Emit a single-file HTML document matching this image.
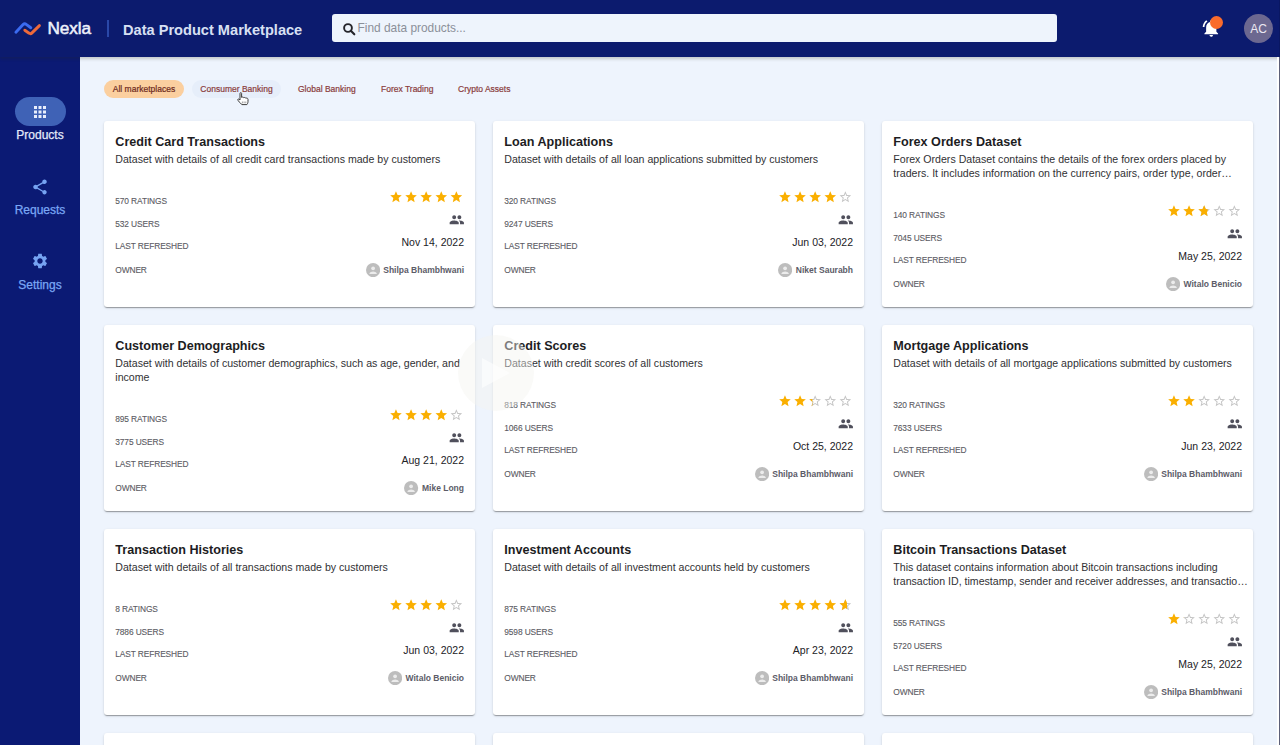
<!DOCTYPE html>
<html><head><meta charset="utf-8"><title>Data Product Marketplace</title>
<style>
*{margin:0;padding:0;box-sizing:border-box}
html,body{width:1280px;height:745px;overflow:hidden;background:#eef4fd;font-family:"Liberation Sans",sans-serif}
#hdr{position:absolute;left:0;top:0;width:1280px;height:57px;background:#0c1b6e;z-index:3;box-shadow:0 2px 3px rgba(40,40,20,0.22)}
#side{position:absolute;left:0;top:57px;width:80px;height:688px;background:#0b1a74;z-index:2}
.card{position:absolute;width:371px;height:186px;background:#fff;border-radius:3px;box-shadow:0px 2px 1px -1px rgba(0,0,0,0.2),0px 1px 1px 0px rgba(0,0,0,0.14),0px 1px 3px 0px rgba(0,0,0,0.12)}
.card div{position:absolute;white-space:nowrap}
.ttl{left:11.3px;font-size:12.6px;line-height:12.6px;font-weight:bold;color:#1d1d1f}
.dsc{left:11.3px;font-size:10.6px;line-height:14px;color:#313134}
.lab{left:11.3px;font-size:8.4px;line-height:8.4px;letter-spacing:-0.12px;color:#5a5a62;-webkit-text-stroke:0.1px #5a5a62}
.stars{position:absolute}
.ppl{position:absolute}
.date{right:11px;font-size:10.5px;line-height:10.5px;color:#222226}
.own{right:11px;font-size:8.5px;line-height:8.5px;font-weight:bold;color:#5c5c68}
.av{position:absolute;left:-17.6px;top:-2.9px;width:14.2px;height:14.2px}
.av svg{display:block}
.chip{position:absolute;top:80px;height:17.5px;border-radius:9px;font-size:8.5px;line-height:18.9px;color:#7a3434;white-space:nowrap;-webkit-text-stroke:0.2px currentColor}
.nav{position:absolute;left:0;width:80px;text-align:center;font-size:12px;line-height:12px;color:#7aa7f5;-webkit-text-stroke:0.25px #7aa7f5}
</style></head>
<body>

<div id="hdr">
  <svg style="position:absolute;left:12px;top:20px" width="32" height="18" viewBox="0 0 32 18">
    <path d="M3.9 12.3 L11.1 4.6 Q12.6 3.1 14.2 4.4 L18.8 7.7" fill="none" stroke="#3b6bf0" stroke-width="2.9" stroke-linecap="round" stroke-linejoin="round"/>
    <path d="M12.8 10.2 L17.1 13.2 Q18.6 14.3 20 12.9 L27.4 5.6" fill="none" stroke="#ee693a" stroke-width="2.9" stroke-linecap="round" stroke-linejoin="round"/>
  </svg>
  <div style="position:absolute;left:47.5px;top:20.3px;font-size:17.2px;line-height:17px;color:#eef1fa;letter-spacing:-0.1px;-webkit-text-stroke:0.5px #eef1fa">Nexla</div>
  <div style="position:absolute;left:107px;top:20px;width:1.5px;height:17px;background:#2a48a8"></div>
  <div style="position:absolute;left:123px;top:22.6px;font-size:14.6px;line-height:14.6px;color:#d8e0f3;font-weight:bold">Data Product Marketplace</div>
  <div style="position:absolute;left:332px;top:14px;width:725px;height:28px;background:#eef4fc;border-radius:3px"></div>
  <svg style="position:absolute;left:342px;top:22px" width="14" height="14" viewBox="0 0 14 14"><circle cx="6" cy="6" r="3.9" fill="none" stroke="#25252a" stroke-width="1.9"/><path d="M8.8 8.8 L12.3 12.3" stroke="#25252a" stroke-width="2.1" stroke-linecap="round"/></svg>
  <div style="position:absolute;left:357.5px;top:23px;font-size:11.9px;line-height:11.9px;color:#8b9099">Find data products...</div>
  <svg style="position:absolute;left:1201px;top:17.5px" width="20.5" height="20.5" viewBox="0 0 24 24"><path d="M7.58 4.08 6.15 2.65C3.75 4.48 2.17 7.3 2.03 10.5h2c.15-2.65 1.51-4.97 3.55-6.42zm12.39 6.42h2c-.15-3.2-1.73-6.02-4.12-7.85l-1.42 1.43c2.02 1.45 3.39 3.77 3.54 6.42zM18 11c0-3.07-1.64-5.64-4.5-6.32V4c0-.83-.67-1.5-1.5-1.5s-1.5.67-1.5 1.5v.68C7.63 5.36 6 7.92 6 11v5l-2 2v1h16v-1l-2-2v-5zm-6 11c.14 0 .27-.01.4-.04.65-.14 1.18-.58 1.44-1.18.1-.24.15-.5.15-.78h-4c.01 1.1.9 2 2.01 2z" fill="#ffffff"/></svg>
  <div style="position:absolute;left:1209.8px;top:15.8px;width:13.5px;height:13.5px;border-radius:50%;background:#fa6b2c"></div>
  <div style="position:absolute;left:1244px;top:13.5px;width:29px;height:29px;border-radius:50%;background:#6c6890;color:#ece9f2;font-size:12px;line-height:30.5px;text-align:center">AC</div>
</div>


<div id="side">
  <div style="position:absolute;left:14.5px;top:40px;width:51.5px;height:29px;border-radius:15px;background:#3f62b6"></div>
  <svg style="position:absolute;left:34.4px;top:48.8px" width="12" height="12" viewBox="4 4 16 16"><path d="M4 8h4V4H4v4zm6 12h4v-4h-4v4zm-6 0h4v-4H4v4zm0-6h4v-4H4v4zm6 0h4v-4h-4v4zm6-10v4h4V4h-4zm-6 4h4V4h-4v4zm6 6h4v-4h-4v4zm0 6h4v-4h-4v4z" fill="#e8eefc"/></svg>
  <div class="nav" style="top:72px;color:#e3eafa;-webkit-text-stroke:0.25px #e3eafa">Products</div>
  <svg style="position:absolute;left:31px;top:120.5px" width="18" height="18" viewBox="0 0 24 24"><path d="M18 16.08c-.76 0-1.44.3-1.96.77L8.91 12.7c.05-.23.09-.46.09-.7s-.04-.47-.09-.7l7.05-4.11c.54.5 1.25.81 2.04.81 1.66 0 3-1.34 3-3s-1.34-3-3-3-3 1.34-3 3c0 .24.04.47.09.7L8.04 9.81C7.5 9.31 6.79 9 6 9c-1.66 0-3 1.34-3 3s1.34 3 3 3c.79 0 1.5-.31 2.04-.81l7.12 4.16c-.05.21-.08.43-.08.65 0 1.61 1.31 2.92 2.92 2.92 1.61 0 2.92-1.31 2.92-2.92s-1.31-2.92-2.92-2.92z" fill="#76a3f2"/></svg>
  <div class="nav" style="top:147px">Requests</div>
  <svg style="position:absolute;left:31px;top:195px" width="18" height="18" viewBox="0 0 24 24"><path d="M19.14 12.94c.04-.3.06-.61.06-.94 0-.32-.02-.64-.07-.94l2.03-1.58c.18-.14.23-.41.12-.61l-1.92-3.32c-.12-.22-.37-.29-.59-.22l-2.39.96c-.5-.38-1.03-.7-1.62-.94l-.36-2.54c-.04-.24-.24-.41-.48-.41h-3.84c-.24 0-.43.17-.47.41l-.36 2.54c-.59.24-1.13.57-1.62.94l-2.39-.96c-.22-.08-.47 0-.59.22L2.74 8.87c-.12.21-.08.47.12.61l2.03 1.58c-.05.3-.09.63-.09.94s.02.64.07.94l-2.03 1.58c-.18.14-.23.41-.12.61l1.92 3.32c.12.22.37.29.59.22l2.39-.96c.5.38 1.03.7 1.62.94l.36 2.54c.05.24.24.41.48.41h3.84c.24 0 .44-.17.47-.41l.36-2.54c.59-.24 1.13-.56 1.62-.94l2.39.96c.22.08.47 0 .59-.22l1.92-3.32c.12-.22.07-.47-.12-.61l-2.01-1.58zM12 15.6c-1.98 0-3.6-1.62-3.6-3.6s1.62-3.6 3.6-3.6 3.6 1.62 3.6 3.6-1.62 3.6-3.6 3.6z" fill="#76a3f2"/></svg>
  <div class="nav" style="top:222px">Settings</div>
</div>

<div class="chip" style="left:104px;color:#6e2a1c;background:#fbcf9f;width:80px;text-align:center;">All marketplaces</div><div class="chip" style="left:192px;color:#8a3c3c;background:#e6eefa;width:89px;text-align:center;">Consumer Banking</div><div class="chip" style="left:290px;color:#8a3c3c;padding:0 8px;">Global Banking</div><div class="chip" style="left:373px;color:#8a3c3c;padding:0 8px;">Forex Trading</div><div class="chip" style="left:450px;color:#8a3c3c;padding:0 8px;">Crypto Assets</div>
<div class="card" style="left:104px;top:120.5px"><div class="ttl" style="top:15.33px">Credit Card Transactions</div><div class="dsc" style="top:31.43px">Dataset with details of all credit card transactions made by customers</div><div class="lab" style="top:76.19px">570 RATINGS</div><div class="lab" style="top:99.19px">532 USERS</div><div class="lab" style="top:121.69px">LAST REFRESHED</div><div class="lab" style="top:145.19px">OWNER</div><svg class="stars" style="left:284.84px;top:69.14px" width="76" height="14" viewBox="0 0 76 14"><g transform="translate(0.00,0) scale(0.5800)"><path d="M12 17.27L18.18 21l-1.64-7.03L22 9.24l-7.19-.61L12 2 9.19 8.63 2 9.24l5.46 4.73L5.82 21z" fill="#faaf00"/></g><g transform="translate(15.10,0) scale(0.5800)"><path d="M12 17.27L18.18 21l-1.64-7.03L22 9.24l-7.19-.61L12 2 9.19 8.63 2 9.24l5.46 4.73L5.82 21z" fill="#faaf00"/></g><g transform="translate(30.20,0) scale(0.5800)"><path d="M12 17.27L18.18 21l-1.64-7.03L22 9.24l-7.19-.61L12 2 9.19 8.63 2 9.24l5.46 4.73L5.82 21z" fill="#faaf00"/></g><g transform="translate(45.30,0) scale(0.5800)"><path d="M12 17.27L18.18 21l-1.64-7.03L22 9.24l-7.19-.61L12 2 9.19 8.63 2 9.24l5.46 4.73L5.82 21z" fill="#faaf00"/></g><g transform="translate(60.40,0) scale(0.5800)"><path d="M12 17.27L18.18 21l-1.64-7.03L22 9.24l-7.19-.61L12 2 9.19 8.63 2 9.24l5.46 4.73L5.82 21z" fill="#faaf00"/></g></svg><svg class="ppl" style="left:345.25px;top:91.95px" width="15.60" height="15.60" viewBox="0 0 24 24"><path d="M16 11c1.66 0 2.99-1.34 2.99-3S17.66 5 16 5c-1.66 0-3 1.34-3 3s1.34 3 3 3zm-8 0c1.66 0 2.99-1.34 2.99-3S9.66 5 8 5C6.34 5 5 6.34 5 8s1.34 3 3 3zm0 2c-2.33 0-7 1.17-7 3.5V19h14v-2.5c0-2.33-4.67-3.5-7-3.5zm8 0c-.29 0-.62.02-.97.05 1.16.84 1.97 1.97 1.97 3.45V19h6v-2.5c0-2.33-4.67-3.5-7-3.5z" fill="#50505c"/></svg><div class="date" style="top:116.31px">Nov 14, 2022</div><div class="own" style="top:145.00px"><span class="av" style=""><svg width="14.2" height="14.2" viewBox="0 0 24 24"><circle cx="12" cy="12" r="12" fill="#bdbdbd"/><circle cx="12" cy="9" r="3.2" fill="#ececec"/><path d="M5.8 17.6c0-2.2 4.1-3.4 6.2-3.4s6.2 1.2 6.2 3.4v.9H5.8z" fill="#ececec"/></svg></span>Shilpa Bhambhwani</div></div><div class="card" style="left:493px;top:120.5px"><div class="ttl" style="top:15.33px">Loan Applications</div><div class="dsc" style="top:31.43px">Dataset with details of all loan applications submitted by customers</div><div class="lab" style="top:76.19px">320 RATINGS</div><div class="lab" style="top:99.19px">9247 USERS</div><div class="lab" style="top:121.69px">LAST REFRESHED</div><div class="lab" style="top:145.19px">OWNER</div><svg class="stars" style="left:284.84px;top:69.14px" width="76" height="14" viewBox="0 0 76 14"><g transform="translate(0.00,0) scale(0.5800)"><path d="M12 17.27L18.18 21l-1.64-7.03L22 9.24l-7.19-.61L12 2 9.19 8.63 2 9.24l5.46 4.73L5.82 21z" fill="#faaf00"/></g><g transform="translate(15.10,0) scale(0.5800)"><path d="M12 17.27L18.18 21l-1.64-7.03L22 9.24l-7.19-.61L12 2 9.19 8.63 2 9.24l5.46 4.73L5.82 21z" fill="#faaf00"/></g><g transform="translate(30.20,0) scale(0.5800)"><path d="M12 17.27L18.18 21l-1.64-7.03L22 9.24l-7.19-.61L12 2 9.19 8.63 2 9.24l5.46 4.73L5.82 21z" fill="#faaf00"/></g><g transform="translate(45.30,0) scale(0.5800)"><path d="M12 17.27L18.18 21l-1.64-7.03L22 9.24l-7.19-.61L12 2 9.19 8.63 2 9.24l5.46 4.73L5.82 21z" fill="#faaf00"/></g><g transform="translate(60.40,0) scale(0.5800)"><path d="M22 9.24l-7.19-.62L12 2 9.19 8.63 2 9.24l5.46 4.73L5.82 21 12 17.27 18.18 21l-1.63-7.03L22 9.24zM12 15.4l-3.76 2.27 1-4.28-3.32-2.88 4.38-.38L12 6.1l1.71 4.04 4.38.38-3.32 2.88 1 4.28L12 15.4z" fill="#c4c4c4"/></g></svg><svg class="ppl" style="left:345.25px;top:91.95px" width="15.60" height="15.60" viewBox="0 0 24 24"><path d="M16 11c1.66 0 2.99-1.34 2.99-3S17.66 5 16 5c-1.66 0-3 1.34-3 3s1.34 3 3 3zm-8 0c1.66 0 2.99-1.34 2.99-3S9.66 5 8 5C6.34 5 5 6.34 5 8s1.34 3 3 3zm0 2c-2.33 0-7 1.17-7 3.5V19h14v-2.5c0-2.33-4.67-3.5-7-3.5zm8 0c-.29 0-.62.02-.97.05 1.16.84 1.97 1.97 1.97 3.45V19h6v-2.5c0-2.33-4.67-3.5-7-3.5z" fill="#50505c"/></svg><div class="date" style="top:116.31px">Jun 03, 2022</div><div class="own" style="top:145.00px"><span class="av" style=""><svg width="14.2" height="14.2" viewBox="0 0 24 24"><circle cx="12" cy="12" r="12" fill="#bdbdbd"/><circle cx="12" cy="9" r="3.2" fill="#ececec"/><path d="M5.8 17.6c0-2.2 4.1-3.4 6.2-3.4s6.2 1.2 6.2 3.4v.9H5.8z" fill="#ececec"/></svg></span>Niket Saurabh</div></div><div class="card" style="left:882px;top:120.5px"><div class="ttl" style="top:15.33px">Forex Orders Dataset</div><div class="dsc" style="top:31.43px">Forex Orders Dataset contains the details of the forex orders placed by<br>traders. It includes information on the currency pairs, order type, order…</div><div class="lab" style="top:90.19px">140 RATINGS</div><div class="lab" style="top:113.19px">7045 USERS</div><div class="lab" style="top:135.69px">LAST REFRESHED</div><div class="lab" style="top:159.19px">OWNER</div><svg class="stars" style="left:284.84px;top:83.14px" width="76" height="14" viewBox="0 0 76 14"><g transform="translate(0.00,0) scale(0.5800)"><path d="M12 17.27L18.18 21l-1.64-7.03L22 9.24l-7.19-.61L12 2 9.19 8.63 2 9.24l5.46 4.73L5.82 21z" fill="#faaf00"/></g><g transform="translate(15.10,0) scale(0.5800)"><path d="M12 17.27L18.18 21l-1.64-7.03L22 9.24l-7.19-.61L12 2 9.19 8.63 2 9.24l5.46 4.73L5.82 21z" fill="#faaf00"/></g><g transform="translate(30.20,0) scale(0.5800)"><path d="M22 9.24l-7.19-.62L12 2 9.19 8.63 2 9.24l5.46 4.73L5.82 21 12 17.27 18.18 21l-1.63-7.03L22 9.24zM12 15.4l-3.76 2.27 1-4.28-3.32-2.88 4.38-.38L12 6.1l1.71 4.04 4.38.38-3.32 2.88 1 4.28L12 15.4z" fill="#c4c4c4"/><clipPath id="c2"><rect x="0" y="0" width="18.00" height="24"/></clipPath><path d="M12 17.27L18.18 21l-1.64-7.03L22 9.24l-7.19-.61L12 2 9.19 8.63 2 9.24l5.46 4.73L5.82 21z" fill="#faaf00" clip-path="url(#c2)"/></g><g transform="translate(45.30,0) scale(0.5800)"><path d="M22 9.24l-7.19-.62L12 2 9.19 8.63 2 9.24l5.46 4.73L5.82 21 12 17.27 18.18 21l-1.63-7.03L22 9.24zM12 15.4l-3.76 2.27 1-4.28-3.32-2.88 4.38-.38L12 6.1l1.71 4.04 4.38.38-3.32 2.88 1 4.28L12 15.4z" fill="#c4c4c4"/></g><g transform="translate(60.40,0) scale(0.5800)"><path d="M22 9.24l-7.19-.62L12 2 9.19 8.63 2 9.24l5.46 4.73L5.82 21 12 17.27 18.18 21l-1.63-7.03L22 9.24zM12 15.4l-3.76 2.27 1-4.28-3.32-2.88 4.38-.38L12 6.1l1.71 4.04 4.38.38-3.32 2.88 1 4.28L12 15.4z" fill="#c4c4c4"/></g></svg><svg class="ppl" style="left:345.25px;top:105.95px" width="15.60" height="15.60" viewBox="0 0 24 24"><path d="M16 11c1.66 0 2.99-1.34 2.99-3S17.66 5 16 5c-1.66 0-3 1.34-3 3s1.34 3 3 3zm-8 0c1.66 0 2.99-1.34 2.99-3S9.66 5 8 5C6.34 5 5 6.34 5 8s1.34 3 3 3zm0 2c-2.33 0-7 1.17-7 3.5V19h14v-2.5c0-2.33-4.67-3.5-7-3.5zm8 0c-.29 0-.62.02-.97.05 1.16.84 1.97 1.97 1.97 3.45V19h6v-2.5c0-2.33-4.67-3.5-7-3.5z" fill="#50505c"/></svg><div class="date" style="top:130.31px">May 25, 2022</div><div class="own" style="top:159.00px"><span class="av" style=""><svg width="14.2" height="14.2" viewBox="0 0 24 24"><circle cx="12" cy="12" r="12" fill="#bdbdbd"/><circle cx="12" cy="9" r="3.2" fill="#ececec"/><path d="M5.8 17.6c0-2.2 4.1-3.4 6.2-3.4s6.2 1.2 6.2 3.4v.9H5.8z" fill="#ececec"/></svg></span>Witalo Benicio</div></div><div class="card" style="left:104px;top:324.5px"><div class="ttl" style="top:15.33px">Customer Demographics</div><div class="dsc" style="top:31.43px">Dataset with details of customer demographics, such as age, gender, and<br>income</div><div class="lab" style="top:90.19px">895 RATINGS</div><div class="lab" style="top:113.19px">3775 USERS</div><div class="lab" style="top:135.69px">LAST REFRESHED</div><div class="lab" style="top:159.19px">OWNER</div><svg class="stars" style="left:284.84px;top:83.14px" width="76" height="14" viewBox="0 0 76 14"><g transform="translate(0.00,0) scale(0.5800)"><path d="M12 17.27L18.18 21l-1.64-7.03L22 9.24l-7.19-.61L12 2 9.19 8.63 2 9.24l5.46 4.73L5.82 21z" fill="#faaf00"/></g><g transform="translate(15.10,0) scale(0.5800)"><path d="M12 17.27L18.18 21l-1.64-7.03L22 9.24l-7.19-.61L12 2 9.19 8.63 2 9.24l5.46 4.73L5.82 21z" fill="#faaf00"/></g><g transform="translate(30.20,0) scale(0.5800)"><path d="M12 17.27L18.18 21l-1.64-7.03L22 9.24l-7.19-.61L12 2 9.19 8.63 2 9.24l5.46 4.73L5.82 21z" fill="#faaf00"/></g><g transform="translate(45.30,0) scale(0.5800)"><path d="M12 17.27L18.18 21l-1.64-7.03L22 9.24l-7.19-.61L12 2 9.19 8.63 2 9.24l5.46 4.73L5.82 21z" fill="#faaf00"/></g><g transform="translate(60.40,0) scale(0.5800)"><path d="M22 9.24l-7.19-.62L12 2 9.19 8.63 2 9.24l5.46 4.73L5.82 21 12 17.27 18.18 21l-1.63-7.03L22 9.24zM12 15.4l-3.76 2.27 1-4.28-3.32-2.88 4.38-.38L12 6.1l1.71 4.04 4.38.38-3.32 2.88 1 4.28L12 15.4z" fill="#c4c4c4"/></g></svg><svg class="ppl" style="left:345.25px;top:105.95px" width="15.60" height="15.60" viewBox="0 0 24 24"><path d="M16 11c1.66 0 2.99-1.34 2.99-3S17.66 5 16 5c-1.66 0-3 1.34-3 3s1.34 3 3 3zm-8 0c1.66 0 2.99-1.34 2.99-3S9.66 5 8 5C6.34 5 5 6.34 5 8s1.34 3 3 3zm0 2c-2.33 0-7 1.17-7 3.5V19h14v-2.5c0-2.33-4.67-3.5-7-3.5zm8 0c-.29 0-.62.02-.97.05 1.16.84 1.97 1.97 1.97 3.45V19h6v-2.5c0-2.33-4.67-3.5-7-3.5z" fill="#50505c"/></svg><div class="date" style="top:130.31px">Aug 21, 2022</div><div class="own" style="top:159.00px"><span class="av" style=""><svg width="14.2" height="14.2" viewBox="0 0 24 24"><circle cx="12" cy="12" r="12" fill="#bdbdbd"/><circle cx="12" cy="9" r="3.2" fill="#ececec"/><path d="M5.8 17.6c0-2.2 4.1-3.4 6.2-3.4s6.2 1.2 6.2 3.4v.9H5.8z" fill="#ececec"/></svg></span>Mike Long</div></div><div class="card" style="left:493px;top:324.5px"><div class="ttl" style="top:15.33px">Credit Scores</div><div class="dsc" style="top:31.43px">Dataset with credit scores of all customers</div><div class="lab" style="top:76.19px">818 RATINGS</div><div class="lab" style="top:99.19px">1066 USERS</div><div class="lab" style="top:121.69px">LAST REFRESHED</div><div class="lab" style="top:145.19px">OWNER</div><svg class="stars" style="left:284.84px;top:69.14px" width="76" height="14" viewBox="0 0 76 14"><g transform="translate(0.00,0) scale(0.5800)"><path d="M12 17.27L18.18 21l-1.64-7.03L22 9.24l-7.19-.61L12 2 9.19 8.63 2 9.24l5.46 4.73L5.82 21z" fill="#faaf00"/></g><g transform="translate(15.10,0) scale(0.5800)"><path d="M12 17.27L18.18 21l-1.64-7.03L22 9.24l-7.19-.61L12 2 9.19 8.63 2 9.24l5.46 4.73L5.82 21z" fill="#faaf00"/></g><g transform="translate(30.20,0) scale(0.5800)"><path d="M22 9.24l-7.19-.62L12 2 9.19 8.63 2 9.24l5.46 4.73L5.82 21 12 17.27 18.18 21l-1.63-7.03L22 9.24zM12 15.4l-3.76 2.27 1-4.28-3.32-2.88 4.38-.38L12 6.1l1.71 4.04 4.38.38-3.32 2.88 1 4.28L12 15.4z" fill="#c4c4c4"/><clipPath id="c4"><rect x="0" y="0" width="7.20" height="24"/></clipPath><path d="M12 17.27L18.18 21l-1.64-7.03L22 9.24l-7.19-.61L12 2 9.19 8.63 2 9.24l5.46 4.73L5.82 21z" fill="#faaf00" clip-path="url(#c4)"/></g><g transform="translate(45.30,0) scale(0.5800)"><path d="M22 9.24l-7.19-.62L12 2 9.19 8.63 2 9.24l5.46 4.73L5.82 21 12 17.27 18.18 21l-1.63-7.03L22 9.24zM12 15.4l-3.76 2.27 1-4.28-3.32-2.88 4.38-.38L12 6.1l1.71 4.04 4.38.38-3.32 2.88 1 4.28L12 15.4z" fill="#c4c4c4"/></g><g transform="translate(60.40,0) scale(0.5800)"><path d="M22 9.24l-7.19-.62L12 2 9.19 8.63 2 9.24l5.46 4.73L5.82 21 12 17.27 18.18 21l-1.63-7.03L22 9.24zM12 15.4l-3.76 2.27 1-4.28-3.32-2.88 4.38-.38L12 6.1l1.71 4.04 4.38.38-3.32 2.88 1 4.28L12 15.4z" fill="#c4c4c4"/></g></svg><svg class="ppl" style="left:345.25px;top:91.95px" width="15.60" height="15.60" viewBox="0 0 24 24"><path d="M16 11c1.66 0 2.99-1.34 2.99-3S17.66 5 16 5c-1.66 0-3 1.34-3 3s1.34 3 3 3zm-8 0c1.66 0 2.99-1.34 2.99-3S9.66 5 8 5C6.34 5 5 6.34 5 8s1.34 3 3 3zm0 2c-2.33 0-7 1.17-7 3.5V19h14v-2.5c0-2.33-4.67-3.5-7-3.5zm8 0c-.29 0-.62.02-.97.05 1.16.84 1.97 1.97 1.97 3.45V19h6v-2.5c0-2.33-4.67-3.5-7-3.5z" fill="#50505c"/></svg><div class="date" style="top:116.31px">Oct 25, 2022</div><div class="own" style="top:145.00px"><span class="av" style=""><svg width="14.2" height="14.2" viewBox="0 0 24 24"><circle cx="12" cy="12" r="12" fill="#bdbdbd"/><circle cx="12" cy="9" r="3.2" fill="#ececec"/><path d="M5.8 17.6c0-2.2 4.1-3.4 6.2-3.4s6.2 1.2 6.2 3.4v.9H5.8z" fill="#ececec"/></svg></span>Shilpa Bhambhwani</div></div><div class="card" style="left:882px;top:324.5px"><div class="ttl" style="top:15.33px">Mortgage Applications</div><div class="dsc" style="top:31.43px">Dataset with details of all mortgage applications submitted by customers</div><div class="lab" style="top:76.19px">320 RATINGS</div><div class="lab" style="top:99.19px">7633 USERS</div><div class="lab" style="top:121.69px">LAST REFRESHED</div><div class="lab" style="top:145.19px">OWNER</div><svg class="stars" style="left:284.84px;top:69.14px" width="76" height="14" viewBox="0 0 76 14"><g transform="translate(0.00,0) scale(0.5800)"><path d="M12 17.27L18.18 21l-1.64-7.03L22 9.24l-7.19-.61L12 2 9.19 8.63 2 9.24l5.46 4.73L5.82 21z" fill="#faaf00"/></g><g transform="translate(15.10,0) scale(0.5800)"><path d="M12 17.27L18.18 21l-1.64-7.03L22 9.24l-7.19-.61L12 2 9.19 8.63 2 9.24l5.46 4.73L5.82 21z" fill="#faaf00"/></g><g transform="translate(30.20,0) scale(0.5800)"><path d="M22 9.24l-7.19-.62L12 2 9.19 8.63 2 9.24l5.46 4.73L5.82 21 12 17.27 18.18 21l-1.63-7.03L22 9.24zM12 15.4l-3.76 2.27 1-4.28-3.32-2.88 4.38-.38L12 6.1l1.71 4.04 4.38.38-3.32 2.88 1 4.28L12 15.4z" fill="#c4c4c4"/></g><g transform="translate(45.30,0) scale(0.5800)"><path d="M22 9.24l-7.19-.62L12 2 9.19 8.63 2 9.24l5.46 4.73L5.82 21 12 17.27 18.18 21l-1.63-7.03L22 9.24zM12 15.4l-3.76 2.27 1-4.28-3.32-2.88 4.38-.38L12 6.1l1.71 4.04 4.38.38-3.32 2.88 1 4.28L12 15.4z" fill="#c4c4c4"/></g><g transform="translate(60.40,0) scale(0.5800)"><path d="M22 9.24l-7.19-.62L12 2 9.19 8.63 2 9.24l5.46 4.73L5.82 21 12 17.27 18.18 21l-1.63-7.03L22 9.24zM12 15.4l-3.76 2.27 1-4.28-3.32-2.88 4.38-.38L12 6.1l1.71 4.04 4.38.38-3.32 2.88 1 4.28L12 15.4z" fill="#c4c4c4"/></g></svg><svg class="ppl" style="left:345.25px;top:91.95px" width="15.60" height="15.60" viewBox="0 0 24 24"><path d="M16 11c1.66 0 2.99-1.34 2.99-3S17.66 5 16 5c-1.66 0-3 1.34-3 3s1.34 3 3 3zm-8 0c1.66 0 2.99-1.34 2.99-3S9.66 5 8 5C6.34 5 5 6.34 5 8s1.34 3 3 3zm0 2c-2.33 0-7 1.17-7 3.5V19h14v-2.5c0-2.33-4.67-3.5-7-3.5zm8 0c-.29 0-.62.02-.97.05 1.16.84 1.97 1.97 1.97 3.45V19h6v-2.5c0-2.33-4.67-3.5-7-3.5z" fill="#50505c"/></svg><div class="date" style="top:116.31px">Jun 23, 2022</div><div class="own" style="top:145.00px"><span class="av" style=""><svg width="14.2" height="14.2" viewBox="0 0 24 24"><circle cx="12" cy="12" r="12" fill="#bdbdbd"/><circle cx="12" cy="9" r="3.2" fill="#ececec"/><path d="M5.8 17.6c0-2.2 4.1-3.4 6.2-3.4s6.2 1.2 6.2 3.4v.9H5.8z" fill="#ececec"/></svg></span>Shilpa Bhambhwani</div></div><div class="card" style="left:104px;top:528.5px"><div class="ttl" style="top:15.33px">Transaction Histories</div><div class="dsc" style="top:31.43px">Dataset with details of all transactions made by customers</div><div class="lab" style="top:76.19px">8 RATINGS</div><div class="lab" style="top:99.19px">7886 USERS</div><div class="lab" style="top:121.69px">LAST REFRESHED</div><div class="lab" style="top:145.19px">OWNER</div><svg class="stars" style="left:284.84px;top:69.14px" width="76" height="14" viewBox="0 0 76 14"><g transform="translate(0.00,0) scale(0.5800)"><path d="M12 17.27L18.18 21l-1.64-7.03L22 9.24l-7.19-.61L12 2 9.19 8.63 2 9.24l5.46 4.73L5.82 21z" fill="#faaf00"/></g><g transform="translate(15.10,0) scale(0.5800)"><path d="M12 17.27L18.18 21l-1.64-7.03L22 9.24l-7.19-.61L12 2 9.19 8.63 2 9.24l5.46 4.73L5.82 21z" fill="#faaf00"/></g><g transform="translate(30.20,0) scale(0.5800)"><path d="M12 17.27L18.18 21l-1.64-7.03L22 9.24l-7.19-.61L12 2 9.19 8.63 2 9.24l5.46 4.73L5.82 21z" fill="#faaf00"/></g><g transform="translate(45.30,0) scale(0.5800)"><path d="M12 17.27L18.18 21l-1.64-7.03L22 9.24l-7.19-.61L12 2 9.19 8.63 2 9.24l5.46 4.73L5.82 21z" fill="#faaf00"/></g><g transform="translate(60.40,0) scale(0.5800)"><path d="M22 9.24l-7.19-.62L12 2 9.19 8.63 2 9.24l5.46 4.73L5.82 21 12 17.27 18.18 21l-1.63-7.03L22 9.24zM12 15.4l-3.76 2.27 1-4.28-3.32-2.88 4.38-.38L12 6.1l1.71 4.04 4.38.38-3.32 2.88 1 4.28L12 15.4z" fill="#c4c4c4"/></g></svg><svg class="ppl" style="left:345.25px;top:91.95px" width="15.60" height="15.60" viewBox="0 0 24 24"><path d="M16 11c1.66 0 2.99-1.34 2.99-3S17.66 5 16 5c-1.66 0-3 1.34-3 3s1.34 3 3 3zm-8 0c1.66 0 2.99-1.34 2.99-3S9.66 5 8 5C6.34 5 5 6.34 5 8s1.34 3 3 3zm0 2c-2.33 0-7 1.17-7 3.5V19h14v-2.5c0-2.33-4.67-3.5-7-3.5zm8 0c-.29 0-.62.02-.97.05 1.16.84 1.97 1.97 1.97 3.45V19h6v-2.5c0-2.33-4.67-3.5-7-3.5z" fill="#50505c"/></svg><div class="date" style="top:116.31px">Jun 03, 2022</div><div class="own" style="top:145.00px"><span class="av" style=""><svg width="14.2" height="14.2" viewBox="0 0 24 24"><circle cx="12" cy="12" r="12" fill="#bdbdbd"/><circle cx="12" cy="9" r="3.2" fill="#ececec"/><path d="M5.8 17.6c0-2.2 4.1-3.4 6.2-3.4s6.2 1.2 6.2 3.4v.9H5.8z" fill="#ececec"/></svg></span>Witalo Benicio</div></div><div class="card" style="left:493px;top:528.5px"><div class="ttl" style="top:15.33px">Investment Accounts</div><div class="dsc" style="top:31.43px">Dataset with details of all investment accounts held by customers</div><div class="lab" style="top:76.19px">875 RATINGS</div><div class="lab" style="top:99.19px">9598 USERS</div><div class="lab" style="top:121.69px">LAST REFRESHED</div><div class="lab" style="top:145.19px">OWNER</div><svg class="stars" style="left:284.84px;top:69.14px" width="76" height="14" viewBox="0 0 76 14"><g transform="translate(0.00,0) scale(0.5800)"><path d="M12 17.27L18.18 21l-1.64-7.03L22 9.24l-7.19-.61L12 2 9.19 8.63 2 9.24l5.46 4.73L5.82 21z" fill="#faaf00"/></g><g transform="translate(15.10,0) scale(0.5800)"><path d="M12 17.27L18.18 21l-1.64-7.03L22 9.24l-7.19-.61L12 2 9.19 8.63 2 9.24l5.46 4.73L5.82 21z" fill="#faaf00"/></g><g transform="translate(30.20,0) scale(0.5800)"><path d="M12 17.27L18.18 21l-1.64-7.03L22 9.24l-7.19-.61L12 2 9.19 8.63 2 9.24l5.46 4.73L5.82 21z" fill="#faaf00"/></g><g transform="translate(45.30,0) scale(0.5800)"><path d="M12 17.27L18.18 21l-1.64-7.03L22 9.24l-7.19-.61L12 2 9.19 8.63 2 9.24l5.46 4.73L5.82 21z" fill="#faaf00"/></g><g transform="translate(60.40,0) scale(0.5800)"><path d="M22 9.24l-7.19-.62L12 2 9.19 8.63 2 9.24l5.46 4.73L5.82 21 12 17.27 18.18 21l-1.63-7.03L22 9.24zM12 15.4l-3.76 2.27 1-4.28-3.32-2.88 4.38-.38L12 6.1l1.71 4.04 4.38.38-3.32 2.88 1 4.28L12 15.4z" fill="#c4c4c4"/><clipPath id="c7"><rect x="0" y="0" width="14.88" height="24"/></clipPath><path d="M12 17.27L18.18 21l-1.64-7.03L22 9.24l-7.19-.61L12 2 9.19 8.63 2 9.24l5.46 4.73L5.82 21z" fill="#faaf00" clip-path="url(#c7)"/></g></svg><svg class="ppl" style="left:345.25px;top:91.95px" width="15.60" height="15.60" viewBox="0 0 24 24"><path d="M16 11c1.66 0 2.99-1.34 2.99-3S17.66 5 16 5c-1.66 0-3 1.34-3 3s1.34 3 3 3zm-8 0c1.66 0 2.99-1.34 2.99-3S9.66 5 8 5C6.34 5 5 6.34 5 8s1.34 3 3 3zm0 2c-2.33 0-7 1.17-7 3.5V19h14v-2.5c0-2.33-4.67-3.5-7-3.5zm8 0c-.29 0-.62.02-.97.05 1.16.84 1.97 1.97 1.97 3.45V19h6v-2.5c0-2.33-4.67-3.5-7-3.5z" fill="#50505c"/></svg><div class="date" style="top:116.31px">Apr 23, 2022</div><div class="own" style="top:145.00px"><span class="av" style=""><svg width="14.2" height="14.2" viewBox="0 0 24 24"><circle cx="12" cy="12" r="12" fill="#bdbdbd"/><circle cx="12" cy="9" r="3.2" fill="#ececec"/><path d="M5.8 17.6c0-2.2 4.1-3.4 6.2-3.4s6.2 1.2 6.2 3.4v.9H5.8z" fill="#ececec"/></svg></span>Shilpa Bhambhwani</div></div><div class="card" style="left:882px;top:528.5px"><div class="ttl" style="top:15.33px">Bitcoin Transactions Dataset</div><div class="dsc" style="top:31.43px">This dataset contains information about Bitcoin transactions including<br>transaction ID, timestamp, sender and receiver addresses, and transactio…</div><div class="lab" style="top:90.19px">555 RATINGS</div><div class="lab" style="top:113.19px">5720 USERS</div><div class="lab" style="top:135.69px">LAST REFRESHED</div><div class="lab" style="top:159.19px">OWNER</div><svg class="stars" style="left:284.84px;top:83.14px" width="76" height="14" viewBox="0 0 76 14"><g transform="translate(0.00,0) scale(0.5800)"><path d="M12 17.27L18.18 21l-1.64-7.03L22 9.24l-7.19-.61L12 2 9.19 8.63 2 9.24l5.46 4.73L5.82 21z" fill="#faaf00"/></g><g transform="translate(15.10,0) scale(0.5800)"><path d="M22 9.24l-7.19-.62L12 2 9.19 8.63 2 9.24l5.46 4.73L5.82 21 12 17.27 18.18 21l-1.63-7.03L22 9.24zM12 15.4l-3.76 2.27 1-4.28-3.32-2.88 4.38-.38L12 6.1l1.71 4.04 4.38.38-3.32 2.88 1 4.28L12 15.4z" fill="#c4c4c4"/><clipPath id="c8"><rect x="0" y="0" width="2.40" height="24"/></clipPath><path d="M12 17.27L18.18 21l-1.64-7.03L22 9.24l-7.19-.61L12 2 9.19 8.63 2 9.24l5.46 4.73L5.82 21z" fill="#faaf00" clip-path="url(#c8)"/></g><g transform="translate(30.20,0) scale(0.5800)"><path d="M22 9.24l-7.19-.62L12 2 9.19 8.63 2 9.24l5.46 4.73L5.82 21 12 17.27 18.18 21l-1.63-7.03L22 9.24zM12 15.4l-3.76 2.27 1-4.28-3.32-2.88 4.38-.38L12 6.1l1.71 4.04 4.38.38-3.32 2.88 1 4.28L12 15.4z" fill="#c4c4c4"/></g><g transform="translate(45.30,0) scale(0.5800)"><path d="M22 9.24l-7.19-.62L12 2 9.19 8.63 2 9.24l5.46 4.73L5.82 21 12 17.27 18.18 21l-1.63-7.03L22 9.24zM12 15.4l-3.76 2.27 1-4.28-3.32-2.88 4.38-.38L12 6.1l1.71 4.04 4.38.38-3.32 2.88 1 4.28L12 15.4z" fill="#c4c4c4"/></g><g transform="translate(60.40,0) scale(0.5800)"><path d="M22 9.24l-7.19-.62L12 2 9.19 8.63 2 9.24l5.46 4.73L5.82 21 12 17.27 18.18 21l-1.63-7.03L22 9.24zM12 15.4l-3.76 2.27 1-4.28-3.32-2.88 4.38-.38L12 6.1l1.71 4.04 4.38.38-3.32 2.88 1 4.28L12 15.4z" fill="#c4c4c4"/></g></svg><svg class="ppl" style="left:345.25px;top:105.95px" width="15.60" height="15.60" viewBox="0 0 24 24"><path d="M16 11c1.66 0 2.99-1.34 2.99-3S17.66 5 16 5c-1.66 0-3 1.34-3 3s1.34 3 3 3zm-8 0c1.66 0 2.99-1.34 2.99-3S9.66 5 8 5C6.34 5 5 6.34 5 8s1.34 3 3 3zm0 2c-2.33 0-7 1.17-7 3.5V19h14v-2.5c0-2.33-4.67-3.5-7-3.5zm8 0c-.29 0-.62.02-.97.05 1.16.84 1.97 1.97 1.97 3.45V19h6v-2.5c0-2.33-4.67-3.5-7-3.5z" fill="#50505c"/></svg><div class="date" style="top:130.31px">May 25, 2022</div><div class="own" style="top:159.00px"><span class="av" style=""><svg width="14.2" height="14.2" viewBox="0 0 24 24"><circle cx="12" cy="12" r="12" fill="#bdbdbd"/><circle cx="12" cy="9" r="3.2" fill="#ececec"/><path d="M5.8 17.6c0-2.2 4.1-3.4 6.2-3.4s6.2 1.2 6.2 3.4v.9H5.8z" fill="#ececec"/></svg></span>Shilpa Bhambhwani</div></div><div class="card" style="left:104px;top:732.5px"></div><div class="card" style="left:493px;top:732.5px"></div><div class="card" style="left:882px;top:732.5px"></div>


<svg style="position:absolute;left:457.5px;top:335px;z-index:4" width="76" height="76" viewBox="0 0 76 76"><circle cx="38" cy="38" r="38" fill="rgba(244,243,240,0.45)"/><path d="M24 23 L52 38 L24 53 Z" fill="rgba(255,255,255,0.6)"/></svg>
<svg style="position:absolute;left:236.8px;top:91.6px;z-index:4" width="13" height="14" viewBox="0 0 13 14"><path d="M3 1.4 C3 0.4 4.6 0.4 4.6 1.4 V5.4 C5.5 4.8 6.5 5.1 6.7 5.7 C7.6 5.2 8.6 5.6 8.8 6.2 C9.7 5.8 11 6.2 11 7.4 V9.4 C11 10.9 10.3 12.1 9.9 12.6 H4.8 C4 11.5 2.5 10 0.9 8.5 C0.2 7.8 1 6.6 2 7.2 L3 8 Z" fill="#ffffff" stroke="#3c3c3c" stroke-width="1" stroke-linejoin="round"/><path d="M5.4 9.5 V11.3 M7.1 9.5 V11.3 M8.8 9.5 V11.3" stroke="#777" stroke-width="0.7"/></svg>
<div style="position:absolute;left:1277px;top:57px;width:1.5px;height:688px;background:#ffffff;z-index:5"></div><div style="position:absolute;left:1278.5px;top:57px;width:1.5px;height:688px;background:#5d6079;z-index:5"></div><div style="position:absolute;left:1278.5px;top:0;width:1.5px;height:57px;background:#0a1762;z-index:5"></div>

</body></html>
